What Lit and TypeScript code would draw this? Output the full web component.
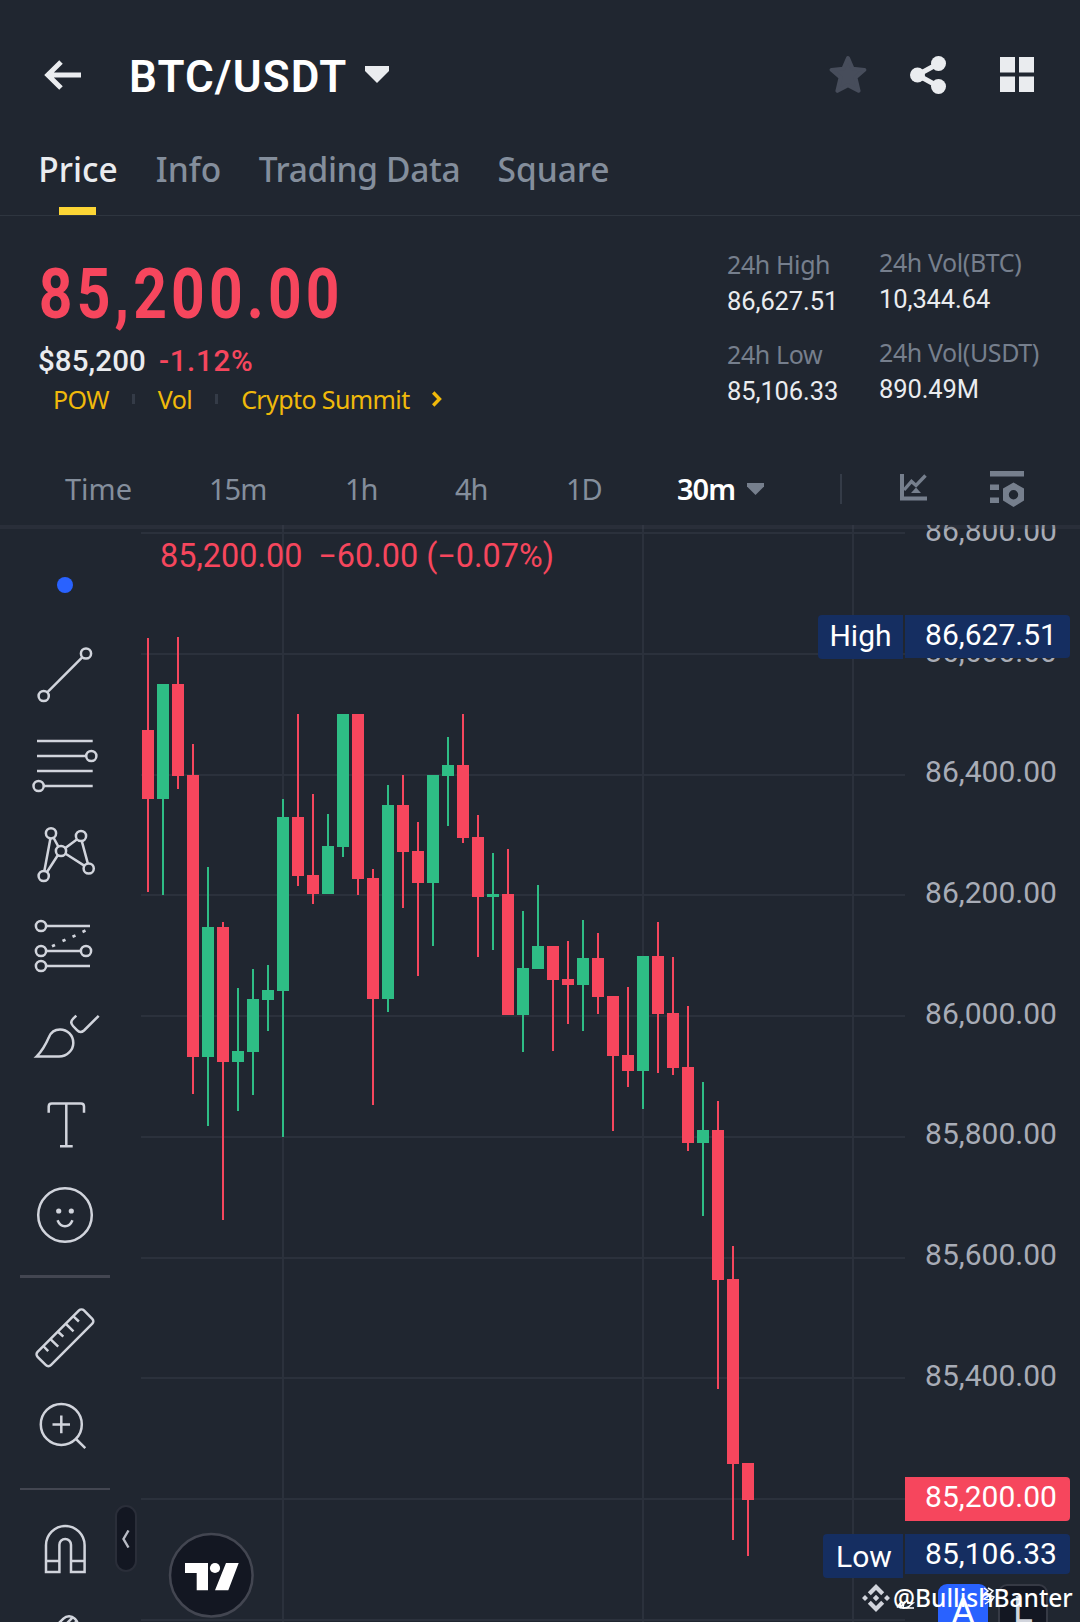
import { LitElement, html, css, svg } from "lit";
import { customElement } from "lit/decorators.js";

type Candle = [number, number, number, number, number];

// [rising, high, body top, body bottom, low] in plot pixels
const CANDLES: Candle[] = [
  [0, 638, 730, 799, 892], [1, 684, 684, 799, 895], [0, 637, 684, 776, 789],
  [0, 744, 775, 1057, 1094], [1, 867, 927, 1057, 1126], [0, 922, 927, 1062, 1220],
  [1, 988, 1051, 1062, 1111], [1, 969, 999, 1052, 1095], [1, 965, 990, 1000, 1031],
  [1, 799, 817, 991, 1137], [0, 714, 817, 876, 886], [0, 794, 875, 894, 904],
  [1, 814, 846, 894, 894], [1, 714, 714, 847, 857], [0, 714, 714, 879, 895],
  [0, 869, 878, 999, 1105], [1, 785, 805, 999, 1012], [0, 775, 805, 852, 908],
  [0, 822, 851, 883, 976], [1, 775, 775, 883, 946], [1, 737, 765, 776, 826],
  [0, 714, 765, 838, 843], [0, 815, 837, 897, 957], [1, 853, 894, 897, 950],
  [0, 849, 894, 1015, 1015], [1, 911, 968, 1015, 1052], [1, 885, 946, 969, 969],
  [0, 946, 946, 980, 1051], [0, 941, 979, 985, 1024], [1, 920, 958, 985, 1031],
  [0, 933, 958, 997, 1014], [0, 996, 996, 1056, 1131], [0, 987, 1055, 1071, 1087],
  [1, 956, 956, 1071, 1109], [0, 922, 956, 1014, 1073], [0, 957, 1013, 1068, 1075],
  [0, 1006, 1067, 1143, 1151], [1, 1082, 1130, 1143, 1216], [0, 1101, 1130, 1280, 1389],
  [0, 1246, 1279, 1464, 1540], [0, 1463, 1463, 1500, 1556],
];

const GRID_Y = [532, 653, 774, 894, 1015, 1136, 1257, 1377, 1498, 1619];
const GRID_X = [282, 642, 852];
const AXIS = ["86,800.00", "86,600.00", "86,400.00", "86,200.00", "86,000.00",
  "85,800.00", "85,600.00", "85,400.00"];

const ring = (x: number, y: number) => svg`<circle cx=${x} cy=${y} r="5.1"/>`;

const TOOLS_DRAW = [
  svg`${ring(23.7, 66)}${ring(66, 23.5)}<path d="M27.5 62.2L62.2 27.3"/>`,
  svg`<path d="M17 21H72.7M17 36H66M17 51H72.7M24 66H72.7"/>${ring(71.3, 36)}${ring(18.6, 66)}`,
  svg`${ring(31, 23.3)}${ring(61, 26)}${ring(41, 41)}${ring(68.7, 58.5)}${ring(23.7, 66)}
    <path d="M33.7 28L38.2 36.4M45.4 38L56.8 29.4M45.6 43.8L64.2 55.6M61.8 31.2L67.8 53.3M30.4 28.5L24.4 60.8M37.8 45.2L27 62"/>`,
  svg`${ring(21, 26)}${ring(21, 51)}${ring(66, 51)}${ring(21, 66)}
    <path d="M26 26H70M26 51H61M26 66H70"/>
    <path stroke-width="2.8" d="M32 46.3L35 45M42.5 41L45.5 39.7M52.5 36.7L55.5 35.5M62.5 32L65.5 30.6"/>`,
  svg`<path d="M16.5 66.6C23 60 26 54 29 47C31 42 35 39.4 40 39.4A13.4 13.4 0 0 1 53.3 53C53.3 60 47 66.6 39 66.6Z"/>
    <path d="M56.3 25.6L53 28.8Q49.5 32.3 53 36L57 40.2Q60.3 43.7 64 40.5L78.7 25.8"/>`,
  svg`<path d="M28.7 32.7V26.5Q28.7 23.5 31.7 23.5H61Q64 23.5 64 26.5V32.7M46.3 23.5V66M40 66.2H52.7"/>`,
  svg`<circle cx="45" cy="45" r="26.8"/><path d="M37.5 50.3Q40 56.3 45 56.3T52.5 50.3"/>
    <circle class="solid" cx="38.7" cy="41" r="2.6"/><circle class="solid" cx="51.3" cy="41" r="2.6"/>`,
];

const TOOLS_MEASURE = [
  svg`<rect x="12.3" y="35.4" width="65.6" height="18.8" rx="3.5" transform="rotate(-45 45 45)"/>
    <path d="M23.2 53L28.2 58.2M30.7 46.3L38.2 53.7M38.3 39L43.3 43.7M46 31L53.5 38.3M53.7 23.7L58.9 28.5"/>`,
  svg`<circle cx="41.3" cy="41.4" r="20.5"/><path d="M32.5 41.4H50M41.3 32.6V50.2M56 56L65.3 65.2"/>`,
];

const TOOLS_SNAP = [
  svg`<path d="M26 69V42.3A19.3 19.3 0 0 1 64.6 42.3V69H51V41.8A5.8 5.8 0 0 0 39.4 41.8V69ZM26 58H39.4M51 58H64.6"/>`,
  svg`<g transform="translate(0 3) rotate(45 48 30)"><rect x="39.5" y="20" width="17" height="60" rx="8"/><path d="M45.3 21V50M50.7 21V50"/></g>`,
];

@customElement("tool-icon")
class ToolIcon extends LitElement {
  static properties = { art: { attribute: false } };
  declare art: unknown;
  static styles = css`
    :host { display: block; width: 90px; height: 90px; flex: none; }
    .icon { display: block; fill: none; stroke: #d1d4dc; stroke-width: 2.5; }
    .solid { fill: #d1d4dc; stroke: none; }
  `;
  render() {
    return html`<svg class="icon" width="90" height="90" viewBox="0 0 90 90">${this.art}</svg>`;
  }
}

@customElement("app-root")
class AppRoot extends LitElement {
  static styles = css`
    :host {
      display: block; width: 1080px; height: 1622px; overflow: hidden;
      background: #202630; color: #eaecef;
      font-family: "Noto Sans", "Open Sans", sans-serif;
    }
    * { box-sizing: border-box; }
    svg { display: block; flex: none; }
    .num { font-family: Roboto, "Liberation Sans", sans-serif; }
    .header { display: flex; align-items: center; height: 118px; padding: 31px 46px 0 44px; }
    .title { margin: 0 0 0 47px; font-family: Roboto, sans-serif; font-size: 44px; font-weight: 600;
      letter-spacing: 1.1px; line-height: 60px; color: #fff; width: 220px; white-space: nowrap; padding-top: 5px; }
    .caret { margin-left: 16px; }
    .actions { display: flex; align-items: center; margin-left: auto; }
    .share { margin-left: 43px; }
    .apps { margin-left: 54px; }
    .tabs { display: flex; height: 98px; border-bottom: 1px solid #2e353f; padding-left: 39px; }
    .tab { display: flex; flex-direction: column; align-items: center; justify-content: space-between;
      font-size: 33.5px; font-weight: 500; line-height: 48px; color: #848e9c; padding-top: 27px; white-space: nowrap; }
    .tab.on { color: #eaecef; }
    .tab.on::after { content: ""; width: 37px; height: 8px; margin-right: 2px; background: #fcd535; }
    .t0 { width: 78px; margin-right: 38px; } .t1 { width: 67px; margin-right: 36px; }
    .t2 { width: 203px; margin-right: 34px; letter-spacing: -.35px; } .t3 { width: 117px; }
    .summary { display: flex; height: 223px; }
    .quote { width: 727px; padding: 35px 0 0 38px; }
    .last { font-size: 71px; font-weight: 700; line-height: 86px; color: #f6465d; height: 86px; letter-spacing: 5px;
      transform: scaleX(.828); transform-origin: left; white-space: nowrap; padding-left: 1px; }
    .sub { display: flex; gap: 13px; font-size: 29.5px; font-weight: 500; line-height: 36px; margin-top: 6px; letter-spacing: .1px; }
    .down { color: #f6465d; letter-spacing: .7px; }
    .tags { display: flex; align-items: center; color: #f0b90b; font-size: 25px; line-height: 34px;
      letter-spacing: -.6px; padding-left: 15px; margin-top: 3px; }
    .sep { width: 3px; height: 10px; background: #343b47; margin: 0 23px; }
    .chev { margin-left: 22px; }
    .stats { display: grid; grid-template-columns: 152px 200px; }
    .col { padding-top: 29px; }
    .col.b { padding-top: 27px; }
    .stat { height: 90px; }
    .k { font-size: 25px; letter-spacing: -.4px; line-height: 38px; color: #767f8d; white-space: nowrap; }
    .v { font-size: 25.5px; line-height: 36px; letter-spacing: -.1px; }
    .intervals { display: grid; align-items: center; height: 86px; padding: 14px 0 0 65px;
      grid-template-columns: 144px 136px 110px 111px 111px 70px 93px 60px 90px auto;
      font-size: 29px; line-height: 40px; color: #848e9c; letter-spacing: -1px; }
    .intervals .time { letter-spacing: 0; }
    .intervals .on { color: #fff; font-weight: 600; }
    .bar { width: 2px; height: 30px; background: #343b47; }
    .chart { position: relative; display: grid; grid-template-columns: 141px 764px 175px; height: 1097px; overflow: hidden; }
    .stripe { position: absolute; left: 0; top: 0; width: 1080px; height: 4px; background: rgba(66, 72, 84, .25); }
    .tools { padding: 15px 0 0 20px; height: 1097px; overflow: hidden; }
    .dotcell { display: flex; align-items: center; justify-content: center; width: 90px; height: 90px; }
    .dot { width: 16px; height: 16px; border-radius: 50%; background: #2962ff; }
    .rule { width: 90px; height: 3px; background: #434651; }
    .r1 { margin: 15px 0; } .r2 { margin: 15px 0 13px; height: 2px; }
    .axis { margin-top: -55px; overflow: hidden; }
    .tick { height: 120.7px; display: flex; align-items: center; justify-content: center;
      padding-right: 3px; font-size: 30px; color: #a8acb6; }
    .legend { position: absolute; left: 160px; top: 10px; font-size: 32.4px; line-height: 42px; color: #f6465d;
      white-space: pre; display: flex; gap: 16px; }
    .tag { position: absolute; height: 44px; display: flex; justify-content: center; align-items: center;
      color: #fff; font-size: 30px; line-height: 36px; background: #152e61; }
    .name { border-radius: 4px 0 0 4px; }
    .val { left: 905px; width: 165px; border-radius: 0 4px 4px 0; padding-left: 7px; }
    .hi { top: 90px; padding-bottom: 2px; } .lo { top: 1009px; }
    .hi.name { left: 818px; width: 85px; } .lo.name { left: 823px; width: 80px; padding: 1px 0 0 2px; }
    .hi.val { height: 43px; padding-bottom: 3px; } .lo.val { height: 40px; }
    .now { top: 952px; background: #f6465d; padding-bottom: 5px; }
    .collapse { position: absolute; left: 115px; top: 980px; width: 22px; height: 67px; border-radius: 11px;
      background: #131722; border: 2px solid #2a2e39; display: flex; align-items: center; justify-content: center; }
    .brand { position: absolute; left: 168px; top: 1007px; }
    .mode { position: absolute; top: 1059px; width: 50px; height: 52px; border-radius: 9px; color: #fff;
      font-size: 37px; line-height: 42px; text-align: center; padding-top: 7px; }
    .auto { left: 938px; background: #2962ff; }
    .log { left: 998px; background: #131722; border: 2px solid #363a45; color: #d1d4dc; padding-top: 3px; }
    .mark { position: absolute; left: 862px; top: 1056px; display: flex; align-items: center; gap: 3px;
      font-size: 24.5px; font-weight: 500; line-height: 34px; color: #fff; white-space: nowrap; }
    .noise { position: absolute; left: 32px; top: 5px; }
  `;

  plot() {
    return html`<svg width="764" height="1097" viewBox="141 525 764 1097" shape-rendering="crispEdges">
      ${GRID_Y.map((y) => svg`<rect x="141" y=${y} width="764" height="2" fill="#2b313c"/>`)}
      ${GRID_X.map((x) => svg`<rect x=${x} y="525" width="2" height="1097" fill="#2b313c"/>`)}
      ${CANDLES.map(([up, hi, top, bot, lo], i) => {
        const c = up ? "#2ebd85" : "#f6465d";
        return svg`<rect x=${147 + 15 * i} y=${hi} width="2" height=${lo - hi} fill=${c}/>
          <rect x=${142 + 15 * i} y=${top} width="12" height=${bot - top} fill=${c}/>`;
      })}
    </svg>`;
  }

  render() {
    const tool = (art: unknown) => html`<tool-icon .art=${art}></tool-icon>`;
    return html`
      <header class="header">
        <svg width="38" height="30" viewBox="0 0 38 30" fill="none" stroke="#eaecef" stroke-width="5"><path d="M3.5 15H37M17 2L3.8 15L17 28"/></svg>
        <h1 class="title">BTC/USDT</h1>
        <svg class="caret" width="24" height="17" viewBox="0 0 24 17"><path fill="#eaecef" d="M0 0H24V5L12 17L0 5Z"/></svg>
        <div class="actions">
          <svg width="38" height="39" viewBox="0 0 38 40" preserveAspectRatio="none"><path fill="#474d5b" stroke="#474d5b" stroke-width="4" stroke-linejoin="round" d="M19 3.2L23.6 14L35.4 15.2L26.4 23L29.6 36.8L19 31L8.4 36.8L11.6 23L2.6 15.2L14.4 14Z"/></svg>
          <svg class="share" width="36" height="38" viewBox="0 0 36 38" fill="#eaecef"><path stroke="#eaecef" stroke-width="5" fill="none" d="M28.5 7.5L7.5 19L28.5 30.5"/><circle cx="7.5" cy="19" r="7.5"/><circle cx="28.5" cy="7.5" r="7.5"/><circle cx="28.5" cy="30.5" r="7.5"/></svg>
          <svg class="apps" width="34" height="35" viewBox="0 0 34 35" fill="#eaecef"><path d="M0 0H15V15.5H0ZM19 0H34V15.5H19ZM0 19.5H15V35H0ZM19 19.5H34V35H19Z"/></svg>
        </div>
      </header>
      <nav class="tabs">
        <div class="tab on t0">Price</div><div class="tab t1">Info</div>
        <div class="tab t2">Trading Data</div><div class="tab t3">Square</div>
      </nav>
      <section class="summary">
        <div class="quote">
          <div class="last num">85,200.00</div>
          <div class="sub num"><span>$85,200</span><span class="down">-1.12%</span></div>
          <div class="tags"><span>POW</span><i class="sep"></i><span>Vol</span><i class="sep"></i><span>Crypto Summit</span>
            <svg class="chev" width="10" height="16" viewBox="0 0 10 16" fill="none" stroke="#f0b90b" stroke-width="3.4"><path d="M1.2 1.5L7.5 8L1.2 14.5"/></svg></div>
        </div>
        <div class="stats">
          <div class="col">
            <div class="stat"><div class="k">24h High</div><div class="v num">86,627.51</div></div>
            <div class="stat"><div class="k">24h Low</div><div class="v num">85,106.33</div></div>
          </div>
          <div class="col b">
            <div class="stat"><div class="k">24h Vol(BTC)</div><div class="v num">10,344.64</div></div>
            <div class="stat"><div class="k">24h Vol(USDT)</div><div class="v num">890.49M</div></div>
          </div>
        </div>
      </section>
      <nav class="intervals">
        <span class="time">Time</span><span>15m</span><span>1h</span><span>4h</span><span>1D</span><span class="on">30m</span>
        <svg width="17" height="12" viewBox="0 0 17 12"><path fill="#767f8d" d="M0 0H17V3.5L8.5 12L0 3.5Z"/></svg>
        <i class="bar"></i>
        <svg width="27" height="30" viewBox="0 0 27 30" fill="none" stroke="#767f8d" stroke-width="4"><path d="M2 0V24.5H27"/><path stroke-width="3.4" d="M4 16L11.5 7.5L16 11.5L25.5 1.5"/><path fill="#767f8d" stroke="none" d="M16 13.5L21 19H11Z"/></svg>
        <svg width="35" height="38" viewBox="0 0 35 38" fill="#767f8d"><path d="M0 1H34V6.5H0ZM0 14.5H9V20H0ZM0 27.5H9V33H0Z"/><path fill-rule="evenodd" d="M23.5 12.5L34 18.5V30.5L23.5 37L13 30.5V18.5ZM23.5 20A4.7 4.7 0 1 0 23.5 29.4A4.7 4.7 0 1 0 23.5 20Z"/></svg>
      </nav>
      <main class="chart">
        <aside class="tools">
          <div class="dotcell"><i class="dot"></i></div>
          ${TOOLS_DRAW.map(tool)}
          <div class="rule r1"></div>
          ${TOOLS_MEASURE.map(tool)}
          <div class="rule r2"></div>
          ${TOOLS_SNAP.map(tool)}
        </aside>
        ${this.plot()}
        <div class="axis num">${AXIS.map((a) => html`<div class="tick">${a}</div>`)}</div>
        <i class="stripe"></i>
        <div class="legend num"><span>85,200.00</span><span>−60.00 (−0.07%)</span></div>
        <div class="tag name hi num">High</div><div class="tag val hi num">86,627.51</div>
        <div class="tag val now num">85,200.00</div>
        <div class="tag name lo num">Low</div><div class="tag val lo num">85,106.33</div>
        <div class="collapse"><svg width="10" height="18" viewBox="0 0 10 18" fill="none" stroke="#b8bbc4" stroke-width="2.4"><path d="M7.5 .5L2.5 9L7.5 17.5"/></svg></div>
        <svg class="brand" width="87" height="87" viewBox="0 0 87 87"><circle cx="43.3" cy="43.3" r="41.3" fill="#131722" stroke="#434651" stroke-width="2.5"/><path fill="#fff" d="M17 31H40V58.3H28.7V41H17ZM58 31H70.7L60.3 58.3H47Z"/><circle cx="47" cy="36" r="5.1" fill="#fff"/></svg>
        <div class="mode auto num">A</div><div class="mode log num">L</div>
        <div class="mark">
          <svg width="28" height="28" viewBox="0 0 28 28" fill="#d1d4dc"><path d="M14 0L22.2 8.2L19.2 11.2L14 6L8.8 11.2L5.8 8.2ZM14 28L22.2 19.8L19.2 16.8L14 22L8.8 16.8L5.8 19.8ZM3 11L6 14L3 17L0 14ZM25 11L28 14L25 17L22 14ZM14 10.8L17.2 14L14 17.2L10.8 14Z"/></svg>
          <span>@BullishBanter</span>
          <svg class="noise" width="102" height="24" viewBox="0 0 102 24" fill="none" stroke="#fff" stroke-width="1.5"><path d="M3 21.5L7 16L6 22L11 15.5M10 17L9 21.5M13 17H19L13 22H20"/><path d="M90 2L94 5L90 8L96 9L90 13L97 14L91 18M94 2L99 5L95 9L100 11L96 17"/></svg>
        </div>
      </main>
    `;
  }
}
